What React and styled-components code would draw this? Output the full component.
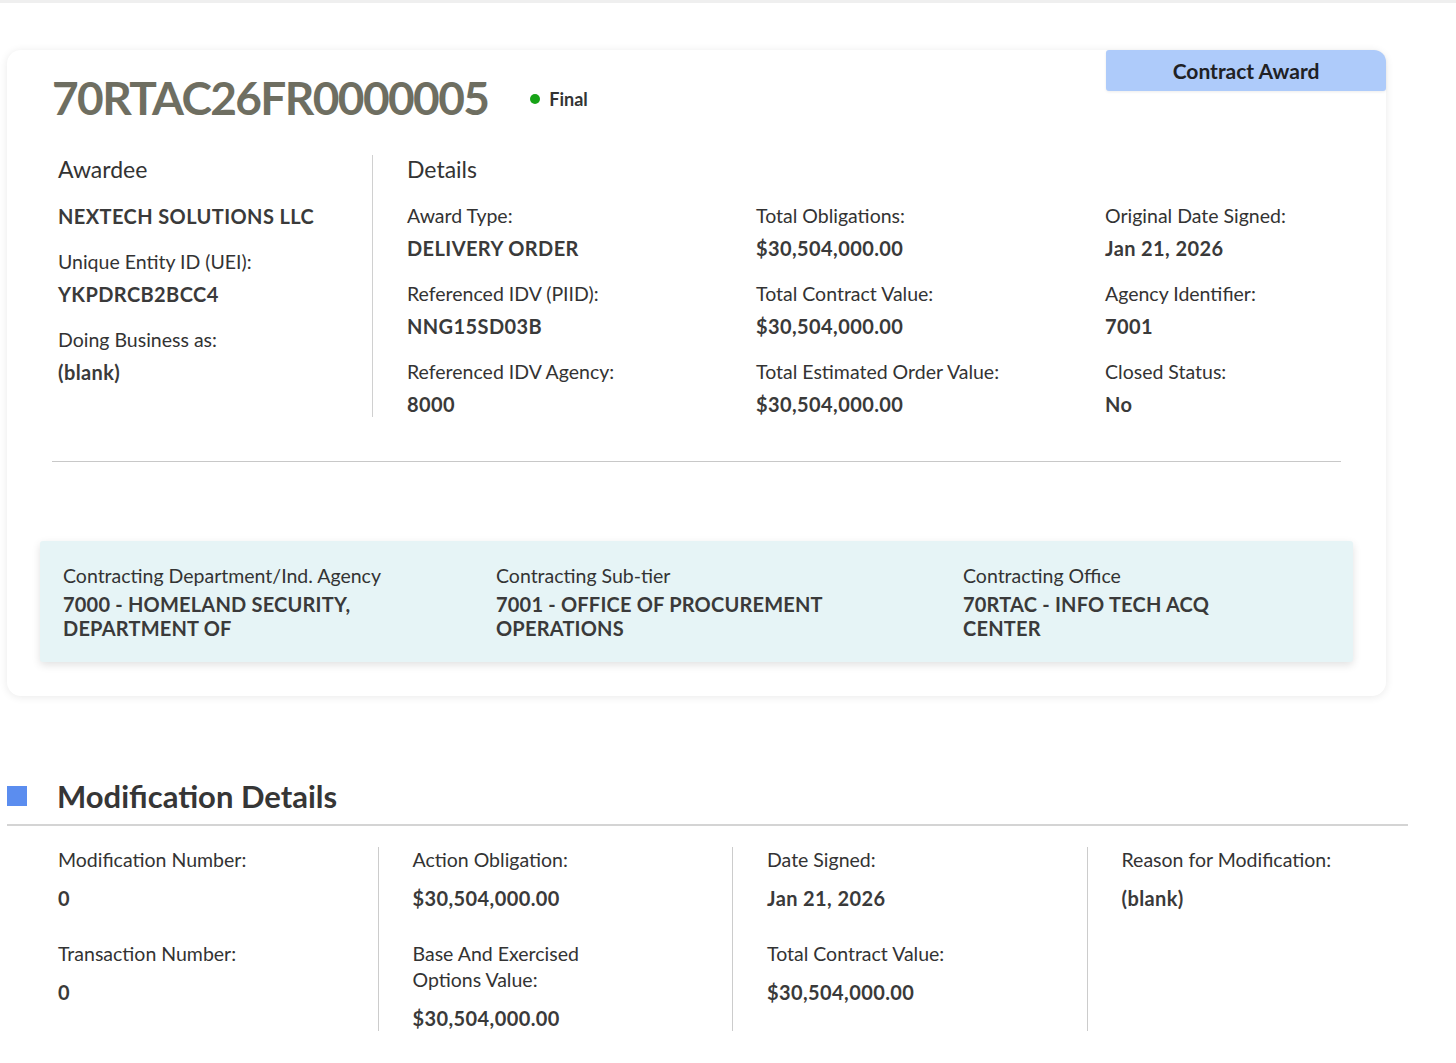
import styled, { createGlobalStyle } from "styled-components";

const GlobalStyle = createGlobalStyle`
  body {
    margin: 0;
    background: #ffffff;
    font-family: Lato, "Open Sans", sans-serif;
    color: #333333;
  }
`;

const Page = styled.div`
  border-top: 3px solid #efefef;
  padding: 47px 48px 40px 7px;
`;

const Card = styled.section`
  position: relative;
  width: 1379px;
  box-sizing: border-box;
  background: #ffffff;
  border-radius: 14px;
  box-shadow: 0 1px 8px rgba(0, 0, 0, 0.09);
  padding: 19px 33px 34px 33px;
`;

const Tab = styled.div`
  position: absolute;
  top: 0;
  right: 0;
  width: 280px;
  height: 41px;
  display: flex;
  align-items: center;
  justify-content: center;
  background: #aecbfa;
  border-radius: 3px 12px 3px 3px;
  box-shadow: 0 1px 3px rgba(0, 0, 0, 0.08);
  font-weight: 700;
  font-size: 21px;
  color: #202124;
`;

const Header = styled.div`
  display: flex;
  align-items: center;
  gap: 42px;
  padding-left: 12px;
`;

const Title = styled.h1`
  margin: 0;
  font-size: 46px;
  line-height: 58px;
  font-weight: 700;
  color: #6e6e61;
  letter-spacing: -1.6px;
`;

const Status = styled.span`
  display: flex;
  align-items: center;
  gap: 9px;
  font-size: 18px;
  font-weight: 700;
  color: #333333;
  padding-top: 2px;

  &::before {
    content: "";
    width: 10px;
    height: 10px;
    border-radius: 50%;
    background: #17a317;
  }
`;

const Body = styled.div`
  display: flex;
  margin: 28px 0 0 18px;
`;

const AwardeeCol = styled.div`
  flex: 0 0 314px;
  border-right: 1px solid #d0d0d0;
  display: flex;
  flex-direction: column;
`;

const DetailsCol = styled.div`
  flex: 1;
  min-width: 0;
  padding-left: 34px;
  display: flex;
  flex-direction: column;
`;

const SectionHead = styled.h2`
  margin: 0 0 20px;
  font-size: 23px;
  line-height: 28px;
  font-weight: 400;
  color: #333333;
`;

const DetailGrid = styled.div`
  display: grid;
  grid-template-columns: 349px 349px 1fr;
  row-gap: 20px;
`;

const Field = styled.div`
  display: flex;
  flex-direction: column;
  gap: ${(p) => p.$gap || 6}px;
  margin-top: ${(p) => p.$mt || 0}px;
`;

const Label = styled.div`
  font-size: 19.5px;
  line-height: 26px;
  font-weight: 400;
  color: #333333;
`;

const Value = styled.div`
  font-size: 20px;
  line-height: 26px;
  font-weight: 700;
  color: #3a3a3a;
  letter-spacing: 0.4px;
`;

const Rule = styled.hr`
  margin: 44px 12px 0;
  border: none;
  border-top: 1px solid #c8c8c8;
`;

const OfficeBox = styled.div`
  margin-top: 79px;
  display: grid;
  grid-template-columns: 433px 467px 1fr;
  padding: 23px 23px 22px;
  background: #e6f4f6;
  border-radius: 3px;
  box-shadow: 0 3px 8px rgba(0, 0, 0, 0.12);
`;

const OfficeLabel = styled.div`
  font-size: 19.5px;
  line-height: 24px;
  color: #333333;
  margin-bottom: 4px;
`;

const OfficeValue = styled.div`
  font-size: 20px;
  line-height: 24px;
  font-weight: 700;
  color: #3a3a3a;
  letter-spacing: 0.2px;
`;

const ModSection = styled.section`
  margin-top: 80px;
  width: 1401px;
`;

const ModHeader = styled.div`
  display: flex;
  align-items: center;
  gap: 30px;
  padding-bottom: 8px;
  border-bottom: 2px solid #d4d4d4;
`;

const Square = styled.span`
  width: 20px;
  height: 20px;
  background: #5b8def;
`;

const ModTitle = styled.h2`
  margin: 0;
  font-size: 31px;
  line-height: 40px;
  font-weight: 700;
  color: #363636;
`;

const ModGrid = styled.div`
  display: grid;
  grid-template-columns: repeat(4, 354.5px);
  margin: 21px 0 0 16px;
`;

const ModCol = styled.div`
  display: flex;
  flex-direction: column;
  gap: 30px;
  padding-left: ${(p) => (p.$first ? 35 : 34)}px;
  border-left: ${(p) => (p.$first ? "none" : "1px solid #cccccc")};
`;

const Lines = ({ lines }) =>
  lines.map((l, i) => (
    <span key={i}>
      {l}
      {i < lines.length - 1 && <br />}
    </span>
  ));

const details = [
  ["Award Type:", "DELIVERY ORDER"],
  ["Total Obligations:", "$30,504,000.00"],
  ["Original Date Signed:", "Jan 21, 2026"],
  ["Referenced IDV (PIID):", "NNG15SD03B"],
  ["Total Contract Value:", "$30,504,000.00"],
  ["Agency Identifier:", "7001"],
  ["Referenced IDV Agency:", "8000"],
  ["Total Estimated Order Value:", "$30,504,000.00"],
  ["Closed Status:", "No"],
];

const offices = [
  ["Contracting Department/Ind. Agency", ["7000 - HOMELAND SECURITY,", "DEPARTMENT OF"]],
  ["Contracting Sub-tier", ["7001 - OFFICE OF PROCUREMENT", "OPERATIONS"]],
  ["Contracting Office", ["70RTAC - INFO TECH ACQ", "CENTER"]],
];

const modCols = [
  [
    [["Modification Number:"], "0"],
    [["Transaction Number:"], "0"],
  ],
  [
    [["Action Obligation:"], "$30,504,000.00"],
    [["Base And Exercised", "Options Value:"], "$30,504,000.00"],
  ],
  [
    [["Date Signed:"], "Jan 21, 2026"],
    [["Total Contract Value:"], "$30,504,000.00"],
  ],
  [[["Reason for Modification:"], "(blank)"]],
];

export default function App() {
  return (
    <>
      <GlobalStyle />
      <Page>
        <Card>
          <Tab>Contract Award</Tab>
          <Header>
            <Title>70RTAC26FR0000005</Title>
            <Status>Final</Status>
          </Header>

          <Body>
            <AwardeeCol>
              <SectionHead>Awardee</SectionHead>
              <Value>NEXTECH SOLUTIONS LLC</Value>
              <Field $mt={20}>
                <Label>Unique Entity ID (UEI):</Label>
                <Value>YKPDRCB2BCC4</Value>
              </Field>
              <Field $mt={20}>
                <Label>Doing Business as:</Label>
                <Value>(blank)</Value>
              </Field>
            </AwardeeCol>

            <DetailsCol>
              <SectionHead>Details</SectionHead>
              <DetailGrid>
                {details.map(([l, v]) => (
                  <Field key={l}>
                    <Label>{l}</Label>
                    <Value>{v}</Value>
                  </Field>
                ))}
              </DetailGrid>
            </DetailsCol>
          </Body>

          <Rule />

          <OfficeBox>
            {offices.map(([l, v]) => (
              <div key={l}>
                <OfficeLabel>{l}</OfficeLabel>
                <OfficeValue>
                  <Lines lines={v} />
                </OfficeValue>
              </div>
            ))}
          </OfficeBox>
        </Card>

        <ModSection>
          <ModHeader>
            <Square />
            <ModTitle>Modification Details</ModTitle>
          </ModHeader>
          <ModGrid>
            {modCols.map((col, i) => (
              <ModCol key={i} $first={i === 0}>
                {col.map(([l, v]) => (
                  <Field key={l.join()} $gap={12}>
                    <Label>
                      <Lines lines={l} />
                    </Label>
                    <Value>{v}</Value>
                  </Field>
                ))}
              </ModCol>
            ))}
          </ModGrid>
        </ModSection>
      </Page>
    </>
  );
}
